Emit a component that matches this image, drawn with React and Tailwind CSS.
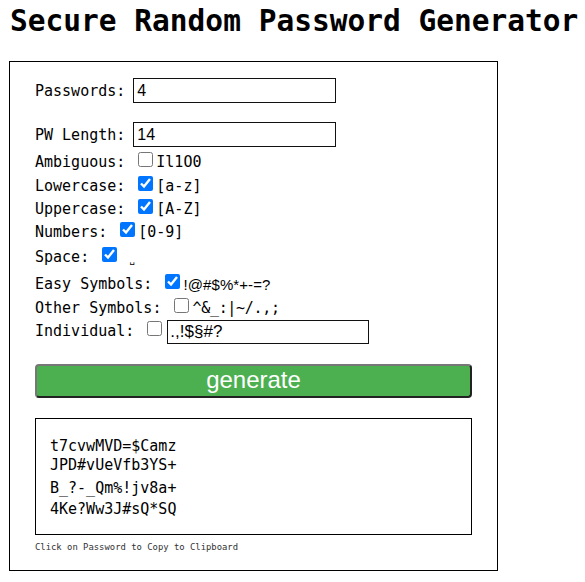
const mono = "font-['DejaVu_Sans_Mono',monospace]"
const sans = "font-['Liberation_Sans',Arial,sans-serif]"

const passwords = ["t7cvwMVD=$Camz", "JPD#vUeVfb3YS+", "B_?-_Qm%!jv8a+", "4Ke?Ww3J#sQ*SQ"]
const lineHeights = ["h-[19px]", "h-[23px]", "h-[21px]", "h-[21px]"]

function Check({ checked, className = "" }) {
  return (
    <input
      type="checkbox"
      defaultChecked={checked}
      className={`ml-[13px] mr-[3px] mb-[4px] h-[15px] w-[15px] shrink-0 accent-[#0075ff] ${className}`}
    />
  )
}

function Label({ children }) {
  return <span className={`${mono} text-[15px] leading-[17px] text-black whitespace-pre`}>{children}</span>
}

function Hint({ children, className = "" }) {
  return (
    <span className={`${mono} text-[15px] leading-[17px] text-black whitespace-pre ${className}`}>{children}</span>
  )
}

export default function App() {
  return (
    <div className="min-h-[582px] w-[585px] bg-white">
      <h1 className={`${mono} h-[61px] pl-[10px] pt-[3px] text-[29.5px] font-bold leading-[36px] text-black whitespace-nowrap`}>
        Secure Random Password Generator
      </h1>

      <div className="ml-[9px] h-[510px] w-[489px] border border-black pl-[25px]">
        <div className="mt-[16px] flex h-[25px] items-center">
          <span className="mb-[1px]">
            <Label>Passwords:</Label>
          </span>
          <input
            defaultValue="4"
            className={`${sans} ml-[8px] h-[25px] w-[203px] border border-[#111] px-[3px] text-[16px] text-black outline-none`}
          />
        </div>

        <div className="mt-[19px] flex h-[25px] items-center">
          <span className="mb-[1px]">
            <Label>PW Length:</Label>
          </span>
          <input
            defaultValue="14"
            className={`${sans} ml-[8px] h-[25px] w-[203px] border border-[#111] px-[3px] text-[16px] text-black outline-none`}
          />
        </div>

        <div className="flex h-[24px] items-end">
          <Label>Ambiguous:</Label>
          <Check />
          <Hint>Il1O0</Hint>
        </div>
        <div className="flex h-[24px] items-end">
          <Label>Lowercase:</Label>
          <Check checked />
          <Hint>[a-z]</Hint>
        </div>
        <div className="flex h-[23px] items-end">
          <Label>Uppercase:</Label>
          <Check checked />
          <Hint>[A-Z]</Hint>
        </div>
        <div className="flex h-[23px] items-end">
          <Label>Numbers:</Label>
          <Check checked />
          <Hint>[0-9]</Hint>
        </div>
        <div className="flex h-[25px] items-end">
          <Label>Space:</Label>
          <Check checked />
          <span className={`${mono} ml-[9px] text-[9px] leading-[12px] text-black`}>␣</span>
        </div>
        <div className="flex h-[27px] items-end">
          <Label>Easy Symbols:</Label>
          <Check checked />
          <span className={`${sans} text-[15px] leading-[17px] tracking-[0.1px] text-black`}>!@#$%*+-=?</span>
        </div>
        <div className="flex h-[24px] items-end">
          <Label>Other Symbols:</Label>
          <Check />
          <Hint className="tracking-[-0.3px]">^&amp;_:|~/.,;</Hint>
        </div>
        <div className="flex h-[23px] items-end">
          <Label>Individual:</Label>
          <Check className="!mr-[5px]" />
          <input
            defaultValue=".,!$§#?"
            className={`${sans} mb-[-4px] h-[24px] w-[202px] border border-[#111] px-[2px] text-[17px] text-black outline-none`}
          />
        </div>

        <button
          type="button"
          className={`${sans} mt-[24px] flex h-[34px] w-[437px] items-center justify-center rounded-[4px] border-2 border-t-[#777] border-l-[#777] border-r-[#222] border-b-[#222] bg-[#4caf50] pb-[3px] text-[24px] leading-none text-white`}
        >
          generate
        </button>

        <div className="mt-[20px] h-[117px] w-[437px] border border-black pl-[14px] pt-[17px]">
          {passwords.map((pw, i) => (
            <div key={pw} className={`${mono} ${lineHeights[i]} text-[15px] leading-[21px] text-black whitespace-pre`}>
              {pw}
            </div>
          ))}
        </div>

        <p className={`${mono} mt-[6px] text-[8.9px] leading-[12px] text-[#333] whitespace-nowrap`}>
          Click on Password to Copy to Clipboard
        </p>
      </div>
    </div>
  )
}
